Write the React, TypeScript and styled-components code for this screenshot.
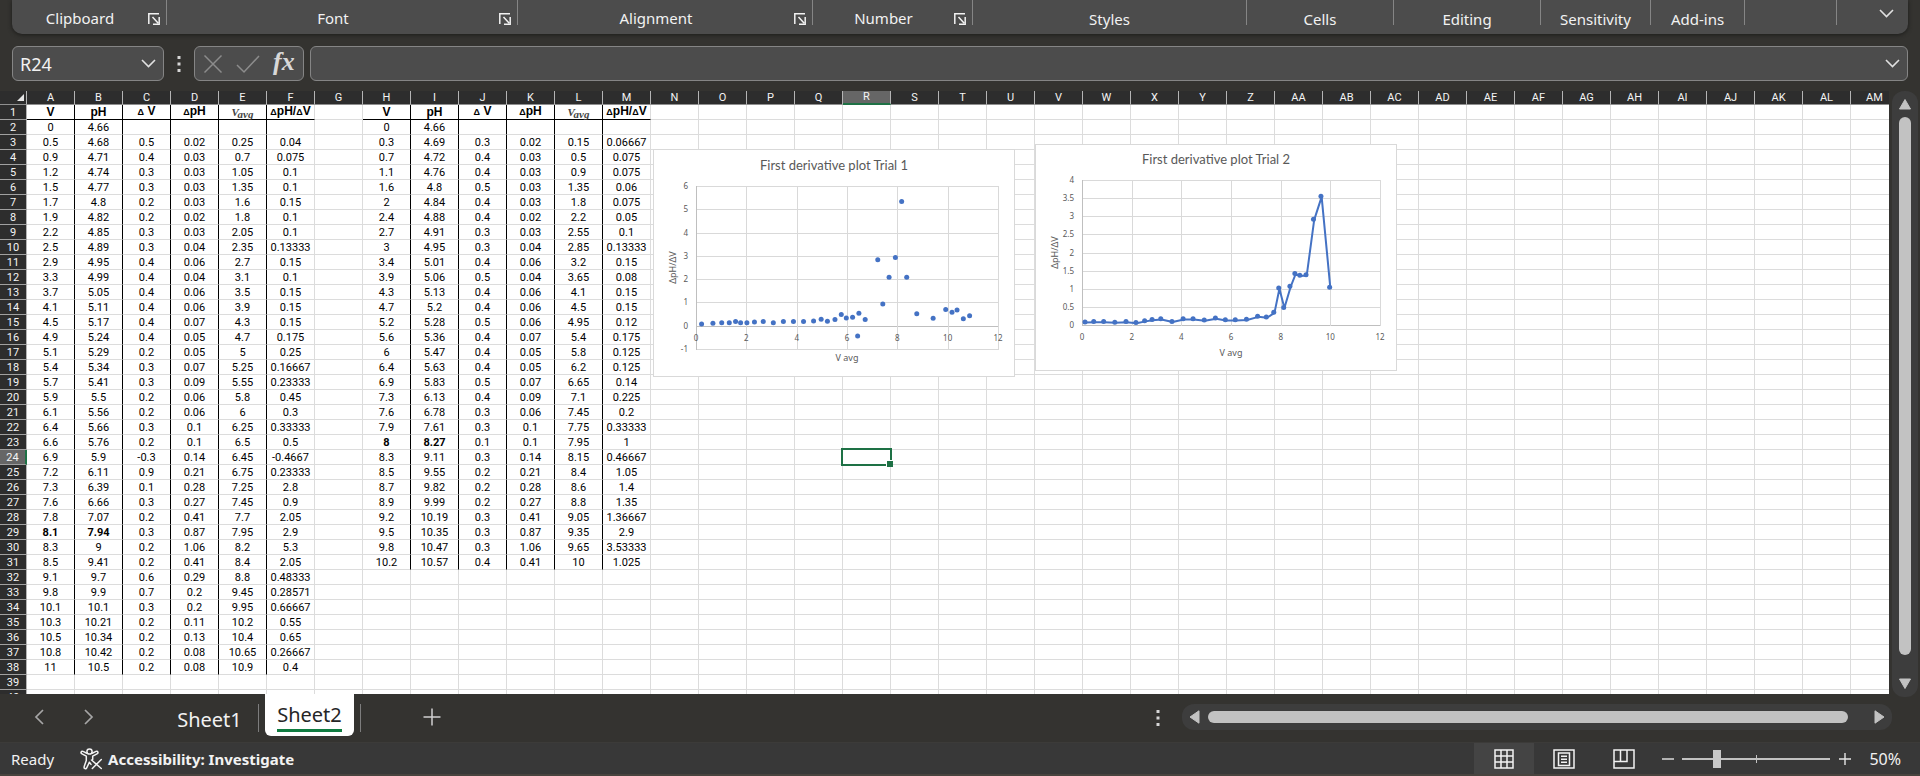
import React from "react";
import styled, { createGlobalStyle, css } from "styled-components";

const uiFont = `"Noto Sans", "Open Sans", sans-serif`;
const cellFont = `Roboto, "Liberation Sans", sans-serif`;
const green = "#1e7145";

const GlobalStyle = createGlobalStyle`
  * { box-sizing: border-box; }
  body {
    margin: 0;
    background: #343330;
    color: #f2f2f2;
    font-family: ${uiFont};
  }
  button, input {
    margin: 0;
    padding: 0;
    border: 0;
    background: none;
    color: inherit;
    font: inherit;
  }
  svg { display: block; }
`;

const Window = styled.div`
  display: flex;
  flex-direction: column;
  height: 100vh;
  overflow: hidden;
`;

/* ---------- ribbon ---------- */

const Ribbon = styled.header`
  display: flex;
  flex: none;
  height: 34px;
  margin: 0 12px;
  background: #4c4c4c;
  border-radius: 0 0 10px 10px;
  box-shadow: 0 1px 4px #1c1c1a;
`;

const Group = styled.section<{ $size: number; $low?: boolean }>`
  display: flex;
  flex: ${(p) => p.$size} 1 0;
  min-width: 0;
  height: 25px;
  padding-top: ${(p) => (p.$low ? 9 : 8)}px;
  border-right: 1px solid #858585;
`;

const GroupLabel = styled.span`
  flex: 1;
  font-size: 15px;
  line-height: 20px;
  text-align: center;
  white-space: nowrap;
`;

const Launcher = styled.button`
  display: flex;
  flex: none;
  align-items: flex-start;
  width: 18px;
  height: 16px;
  padding-top: 5px;
`;

const RibbonEnd = styled.div`
  display: flex;
  flex: 57 1 0;
  align-items: flex-start;
  justify-content: flex-end;
  padding: 9px 14px 0 0;
`;

/* ---------- formula bar ---------- */

const FormulaBar = styled.div`
  display: flex;
  flex: none;
  padding: 12px 12px 10px;
`;

const Field = styled.div`
  display: flex;
  align-items: center;
  height: 35px;
  padding: 0 7px;
  background: #4c4c4c;
  border: 1px solid #858585;
  border-radius: 6px;
`;

const NameField = styled(Field)`
  width: 152px;
`;

const ToolField = styled(Field)`
  gap: 13px;
  width: 110px;
  margin-right: 6px;
  padding: 0 7px 0 8px;
  color: #8c8c8c;
`;

const FormulaField = styled(Field)`
  flex: 1;
`;

const FieldInput = styled.input`
  flex: 1;
  min-width: 0;
  font-size: 18px;
  line-height: 24px;
  outline: none;
`;

const IconButton = styled.button`
  display: flex;
  align-items: center;
  justify-content: center;
`;

const FxButton = styled(IconButton)`
  color: #d8d8d8;
  font: italic 700 26px/30px "Liberation Serif", serif;
  padding-bottom: 4px;
`;

const BarDots = styled.div`
  display: flex;
  align-items: center;
  justify-content: center;
  width: 30px;
`;

/* ---------- grid ---------- */

const Workspace = styled.main`
  display: flex;
  flex: 1;
  min-height: 0;
`;

const Sheet = styled.div`
  position: relative;
  flex: 1;
  min-width: 0;
  overflow: hidden;
  background: #fff;
`;

const GridTable = styled.table`
  table-layout: fixed;
  width: 1899px;
  border-spacing: 0;
  color: #000;
  font-family: ${cellFont};
  font-size: 11px;
  line-height: 13px;
`;

const RowHeadCol = styled.col`
  width: 27px;
`;

const DataCol = styled.col`
  width: 48px;
`;

const headCell = css`
  padding: 0;
  background: #2d2d2d;
  color: #f4f4f4;
  font-size: 11px;
  font-weight: 400;
  text-align: center;
`;

const ColHead = styled.th<{ $active?: boolean }>`
  ${headCell}
  height: 14px;
  line-height: 12px;
  border-right: 1px solid #b4b4b4;
  border-bottom: 1px solid #8f8f8f;
  ${(p) =>
    p.$active &&
    css`
      background: #666;
      border-bottom: 2px solid ${green};
    `}
`;

const Corner = styled(ColHead)`
  & svg {
    margin-left: 17px;
  }
`;

const RowHead = styled.th<{ $active?: boolean }>`
  ${headCell}
  height: 15px;
  line-height: 13px;
  border-right: 1px solid #b4b4b4;
  border-bottom: 1px solid #a0a0a0;
  ${(p) =>
    p.$active &&
    css`
      background: #666;
      border-right: 2px solid ${green};
    `}
`;

const Cell = styled.td<{ $ruled?: boolean; $head?: boolean; $bold?: boolean }>`
  height: 15px;
  padding: 0;
  overflow: visible;
  text-align: center;
  white-space: nowrap;
  font-weight: ${(p) => (p.$bold ? 700 : 400)};
  border-right: 1px solid ${(p) => (p.$ruled ? "#000" : "#dcdcdc")};
  border-bottom: 1px solid ${(p) => (p.$head ? "#000" : "#dcdcdc")};
`;

const SelectedCell = styled(Cell)`
  position: relative;
  &::before {
    content: "";
    position: absolute;
    inset: -2px;
    border: 2px solid ${green};
  }
  &::after {
    content: "";
    position: absolute;
    right: -3px;
    bottom: -3px;
    width: 6px;
    height: 6px;
    background: ${green};
    border: 1px solid #fff;
    border-width: 1px 0 0 1px;
  }
`;

const Heading = styled.span`
  font-family: "Liberation Sans", sans-serif;
  font-size: 12px;
  font-weight: 700;
`;

const Delta = styled.span`
  font-size: 9px;
`;

const Average = styled.i`
  color: #444;
  font-family: "Liberation Serif", serif;
  font-size: 11px;
  font-weight: 700;
`;

const Subscript = styled.span`
  position: relative;
  top: 2px;
`;

const ChartFrame = styled.figure<{ $x: number; $y: number; $height: number }>`
  position: absolute;
  left: ${(p) => p.$x}px;
  top: ${(p) => p.$y}px;
  width: 362px;
  height: ${(p) => p.$height}px;
  margin: 0;
  background: #fff;
  outline: 1px solid #d9d9d9;
  outline-offset: -1px;
`;

const ChartText = styled.text`
  fill: #595959;
  font-family: ${uiFont};
  font-size: 8px;
  text-anchor: middle;
`;

const AxisTitle = styled(ChartText)`
  font-size: 9px;
`;

const TickY = styled(ChartText)`
  text-anchor: end;
`;

const ChartTitle = styled(ChartText)`
  font-family: Lato, sans-serif;
  font-size: 13px;
`;

/* ---------- scroll bars ---------- */

const VerticalRail = styled.aside`
  flex: none;
  width: 31px;
  padding: 0 2px 0 3px;
`;

const VerticalTrack = styled.div`
  display: flex;
  flex-direction: column;
  align-items: center;
  height: calc(100% + 3px);
  padding: 7px 0;
  background: #3d3d3d;
  border-radius: 12px;
`;

const VerticalThumb = styled.div`
  flex: 1;
  width: 12px;
  margin: 5px 0 21px;
  background: #c2c2c2;
  border-radius: 6px;
`;

const HorizontalTrack = styled.div`
  display: flex;
  flex: none;
  align-items: center;
  width: 37%;
  height: 26px;
  margin: 10px 28px 0 22px;
  padding: 0 6px;
  background: #3d3d3d;
  border-radius: 12px;
`;

const HorizontalThumb = styled.div`
  flex: 1;
  height: 12px;
  margin: 0 24px 0 6px;
  background: #c2c2c2;
  border-radius: 6px;
`;

/* ---------- sheet tabs ---------- */

const TabBar = styled.nav`
  display: flex;
  flex: none;
  align-items: flex-start;
  height: 48px;
`;

const Arrows = styled.div`
  display: flex;
  gap: 36px;
  width: 165px;
  padding: 14px 0 0 32px;
  color: #a6a6a6;
`;

const Tab = styled.button`
  width: 93px;
  padding: 12px 4px 0 0;
  font-size: 20px;
  line-height: 28px;
  text-align: center;
`;

const Divider = styled.span`
  width: 1px;
  height: 28px;
  margin-top: 10px;
  background: #7d7d7d;
`;

const ActiveTab = styled.button`
  position: relative;
  width: 89px;
  height: 42px;
  margin: 0 6px;
  background: #fff;
  color: #262626;
  border-radius: 0 0 6px 6px;
  font-size: 20px;
  line-height: 28px;
  &::after {
    content: "";
    position: absolute;
    left: 12px;
    right: 12px;
    bottom: 4px;
    height: 3px;
    background: #107c41;
  }
`;

const AddTab = styled(IconButton)`
  margin: 14px 0 0 62px;
`;

const Spring = styled.div`
  flex: 1;
`;

const TabDots = styled.div`
  margin-top: 16px;
`;

/* ---------- status bar ---------- */

const StatusBar = styled.footer`
  display: flex;
  flex: none;
  align-items: center;
  height: 34px;
  padding: 0 19px 0 11px;
  background: #383838;
  border-top: 1px solid #3c3b39;
  border-bottom: 2px solid #48433e;
  font-size: 15px;
  line-height: 20px;
`;

const AccessButton = styled.button`
  display: flex;
  align-items: center;
  gap: 5px;
  margin-left: 26px;
  font-weight: 700;
`;

const ViewButton = styled(IconButton)<{ $active?: boolean }>`
  width: 60px;
  height: 31px;
  background: ${(p) => (p.$active ? "#444" : "transparent")};
`;

const ZoomGroup = styled.div`
  display: flex;
  align-items: center;
  margin-left: 5px;
`;

const ZoomButton = styled(IconButton)`
  width: 17px;
  height: 20px;
`;

const ZoomRange = styled.input`
  appearance: none;
  width: 148px;
  height: 18px;
  margin: 0 6px;
  background:
    linear-gradient(#c2c2c2, #c2c2c2) 50% 50% / 1px 8px no-repeat,
    linear-gradient(#c2c2c2, #c2c2c2) 50% 50% / 100% 2px no-repeat;
  &::-webkit-slider-thumb {
    appearance: none;
    width: 8px;
    height: 18px;
    background: #c8c8c8;
  }
`;

const ZoomLabel = styled.output`
  width: 48px;
  font-size: 16px;
  text-align: right;
`;

/* ---------- data ---------- */

const trialOne = `0|4.66
0.5|4.68|0.5|0.02|0.25|0.04
0.9|4.71|0.4|0.03|0.7|0.075
1.2|4.74|0.3|0.03|1.05|0.1
1.5|4.77|0.3|0.03|1.35|0.1
1.7|4.8|0.2|0.03|1.6|0.15
1.9|4.82|0.2|0.02|1.8|0.1
2.2|4.85|0.3|0.03|2.05|0.1
2.5|4.89|0.3|0.04|2.35|0.13333
2.9|4.95|0.4|0.06|2.7|0.15
3.3|4.99|0.4|0.04|3.1|0.1
3.7|5.05|0.4|0.06|3.5|0.15
4.1|5.11|0.4|0.06|3.9|0.15
4.5|5.17|0.4|0.07|4.3|0.15
4.9|5.24|0.4|0.05|4.7|0.175
5.1|5.29|0.2|0.05|5|0.25
5.4|5.34|0.3|0.07|5.25|0.16667
5.7|5.41|0.3|0.09|5.55|0.23333
5.9|5.5|0.2|0.06|5.8|0.45
6.1|5.56|0.2|0.06|6|0.3
6.4|5.66|0.3|0.1|6.25|0.33333
6.6|5.76|0.2|0.1|6.5|0.5
6.9|5.9|-0.3|0.14|6.45|-0.4667
7.2|6.11|0.9|0.21|6.75|0.23333
7.3|6.39|0.1|0.28|7.25|2.8
7.6|6.66|0.3|0.27|7.45|0.9
7.8|7.07|0.2|0.41|7.7|2.05
8.1|7.94|0.3|0.87|7.95|2.9
8.3|9|0.2|1.06|8.2|5.3
8.5|9.41|0.2|0.41|8.4|2.05
9.1|9.7|0.6|0.29|8.8|0.48333
9.8|9.9|0.7|0.2|9.45|0.28571
10.1|10.1|0.3|0.2|9.95|0.66667
10.3|10.21|0.2|0.11|10.2|0.55
10.5|10.34|0.2|0.13|10.4|0.65
10.8|10.42|0.2|0.08|10.65|0.26667
11|10.5|0.2|0.08|10.9|0.4`
  .split("\n")
  .map((line) => line.split("|"));

const trialTwo = `0|4.66
0.3|4.69|0.3|0.02|0.15|0.06667
0.7|4.72|0.4|0.03|0.5|0.075
1.1|4.76|0.4|0.03|0.9|0.075
1.6|4.8|0.5|0.03|1.35|0.06
2|4.84|0.4|0.03|1.8|0.075
2.4|4.88|0.4|0.02|2.2|0.05
2.7|4.91|0.3|0.03|2.55|0.1
3|4.95|0.3|0.04|2.85|0.13333
3.4|5.01|0.4|0.06|3.2|0.15
3.9|5.06|0.5|0.04|3.65|0.08
4.3|5.13|0.4|0.06|4.1|0.15
4.7|5.2|0.4|0.06|4.5|0.15
5.2|5.28|0.5|0.06|4.95|0.12
5.6|5.36|0.4|0.07|5.4|0.175
6|5.47|0.4|0.05|5.8|0.125
6.4|5.63|0.4|0.05|6.2|0.125
6.9|5.83|0.5|0.07|6.65|0.14
7.3|6.13|0.4|0.09|7.1|0.225
7.6|6.78|0.3|0.06|7.45|0.2
7.9|7.61|0.3|0.1|7.75|0.33333
8|8.27|0.1|0.1|7.95|1
8.3|9.11|0.3|0.14|8.15|0.46667
8.5|9.55|0.2|0.21|8.4|1.05
8.7|9.82|0.2|0.28|8.6|1.4
8.9|9.99|0.2|0.27|8.8|1.35
9.2|10.19|0.3|0.41|9.05|1.36667
9.5|10.35|0.3|0.87|9.35|2.9
9.8|10.47|0.3|1.06|9.65|3.53333
10.2|10.57|0.4|0.41|10|1.025`
  .split("\n")
  .map((line) => line.split("|"));

const letters = "ABCDEFGHIJKLMNOPQRSTUVWXYZ".split("");
const columns = [...letters, ...letters.slice(0, 13).map((l) => "A" + l)];
const rows = Array.from({ length: 40 }, (_, i) => i + 1);

const headings: React.ReactNode[] = [
  <Heading>V</Heading>,
  <Heading>pH</Heading>,
  <Heading><Delta>Δ</Delta> V</Heading>,
  <Heading><Delta>Δ</Delta>pH</Heading>,
  <Average>V<Subscript>avg</Subscript></Average>,
  <Heading><Delta>Δ</Delta>pH/<Delta>Δ</Delta>V</Heading>,
];

function GridCell({ row, col }: { row: number; col: number }) {
  if (columns[col] === "R" && row === 24) return <SelectedCell />;
  const second = col >= 7;
  const field = second ? col - 7 : col;
  const data = second ? trialTwo : trialOne;
  if (field > 5 || row > data.length + 1) return <Cell />;
  const bold = field < 2 && row === (second ? 23 : 29);
  return (
    <Cell $ruled={field < 5} $head={row === 1} $bold={bold}>
      {row === 1 ? headings[field] : data[row - 2][field]}
    </Cell>
  );
}

/* ---------- charts ---------- */

type ChartProps = {
  title: string;
  x: number;
  y: number;
  height: number;
  plot: { left: number; right: number; top: number; bottom: number };
  min: number;
  max: number;
  step: number;
  data: string[][];
  joined?: boolean;
  titleX: number;
  titleY: number;
  axisY: number;
};

function Chart(p: ChartProps) {
  const { left, right, top, bottom } = p.plot;
  const px = (v: number) => left + (v / 12) * (right - left);
  const py = (v: number) => bottom - ((v - p.min) / (p.max - p.min)) * (bottom - top);
  const ticksY: number[] = [];
  for (let v = p.min; v <= p.max; v += p.step) ticksY.push(v);
  const ticksX = [0, 2, 4, 6, 8, 10, 12];
  const points = p.data.filter((r) => r.length > 2).map((r) => [Number(r[4]), Number(r[5])]);
  const middle = (top + bottom) / 2;
  return (
    <ChartFrame $x={p.x} $y={p.y} $height={p.height}>
      <svg width="362" height={p.height} role="img" aria-label={p.title}>
        {ticksY.map((v) => (
          <line key={v} x1={left} x2={right} y1={Math.round(py(v)) + 0.5} y2={Math.round(py(v)) + 0.5} stroke={v === 0 ? "#bfbfbf" : "#d9d9d9"} />
        ))}
        {ticksX.map((v) => (
          <line key={v} x1={Math.round(px(v)) + 0.5} x2={Math.round(px(v)) + 0.5} y1={top} y2={bottom + 1} stroke={v === 0 ? "#bfbfbf" : "#d9d9d9"} />
        ))}
        <ChartTitle x={p.titleX} y={p.titleY}>{p.title}</ChartTitle>
        {ticksY.map((v) => (
          <TickY key={v} x={left - 8} y={py(v) + 3}>{v}</TickY>
        ))}
        {ticksX.map((v) => (
          <ChartText key={v} x={px(v)} y={py(0) + 15}>{v}</ChartText>
        ))}
        <AxisTitle x={(left + right) / 2} y={p.axisY}>V avg</AxisTitle>
        <AxisTitle transform={`translate(23 ${middle}) rotate(-90)`}>ΔpH/ΔV</AxisTitle>
        {p.joined && (
          <polyline points={points.map(([a, b]) => `${px(a)},${py(b)}`).join(" ")} fill="none" stroke="#4472c4" strokeWidth="2" strokeLinejoin="round" />
        )}
        {points.map(([a, b], i) => (
          <circle key={i} cx={px(a) - 0.7} cy={py(b) - 0.7} r="2.5" fill="#4472c4" />
        ))}
      </svg>
    </ChartFrame>
  );
}

/* ---------- icons ---------- */

const Chevron = () => (
  <svg width="15" height="9" viewBox="0 0 15 9" fill="none" stroke="#e0e0e0" strokeWidth="1.6">
    <path d="M1 1l6.500 6.500L14 1" />
  </svg>
);

const LauncherIcon = () => (
  <svg width="12" height="12" viewBox="0 0 12 12" fill="none" stroke="#f2f2f2" strokeWidth="1.5">
    <path d="M.8 11V.8H11M4.500 4l5.500 6M11.200 4v7.200H5" />
  </svg>
);

const Dots = () => (
  <svg width="4" height="16" viewBox="0 0 4 16" fill="#d6d6d6">
    <rect x=".5" y="0" width="3" height="3" />
    <rect x=".5" y="6.500" width="3" height="3" />
    <rect x=".5" y="13" width="3" height="3" />
  </svg>
);

const arrowPaths = {
  up: "M7 1.500L12.500 11H1.500z",
  down: "M7 12.500L12.500 3H1.500z",
  left: "M2 7L11 .8v12.400z",
  right: "M12 7L3 .8v12.400z",
};

const Arrow = ({ to }: { to: keyof typeof arrowPaths }) => (
  <svg width="14" height="14" viewBox="0 0 14 14" fill="#c2c2c2" stroke="#c2c2c2" strokeWidth="1" strokeLinejoin="round">
    <path d={arrowPaths[to]} />
  </svg>
);

const Angle = ({ to }: { to: "left" | "right" }) => (
  <svg width="14" height="18" viewBox="0 0 14 18" fill="none" stroke="currentColor" strokeWidth="1.700">
    <path d={to === "left" ? "M11 2L4 9l7 7" : "M3 2l7 7-7 7"} />
  </svg>
);

const AccessIcon = () => (
  <svg width="23" height="22" viewBox="0 0 23 22" fill="none" stroke="#f2f2f2" strokeWidth="1.500" strokeLinecap="round" strokeLinejoin="round">
    <circle cx="9.500" cy="3.500" r="2.600" />
    <path d="M6.800 5.200L3 3.400C1.200 2.700.2 5 2 5.900l4.300 2.300v4.200L4.200 18.600c-.6 2 1.800 2.900 2.600 1l2.600-5.400 1.600 2.200M12.200 5.200L16 3.400c1.800-.7 2.800 1.600 1 2.500l-4.300 2.300v3.200M11.500 12l9.800 8.500M21.300 11.500l-9 9" />
  </svg>
);

const NormalViewIcon = () => (
  <svg width="20" height="20" viewBox="0 0 20 20" fill="none" stroke="#f2f2f2" strokeWidth="1.500">
    <path d="M1 1h18v18H1zM7 1v18M13 1v18M1 7h18M1 13h18" />
  </svg>
);

const PageViewIcon = () => (
  <svg width="22" height="20" viewBox="0 0 22 20" fill="none" stroke="#f2f2f2" strokeWidth="1.500">
    <path d="M1 1h20v18H1zM5.500 4h11v12.500h-11zM8 7.200h6M8 10.200h6M8 13.200h6" />
  </svg>
);

const BreakViewIcon = () => (
  <svg width="22" height="20" viewBox="0 0 22 20" fill="none" stroke="#f2f2f2" strokeWidth="1.500">
    <path d="M1 1h20v18H1zM1 12.500h13V1M7.500 1v11.500" />
  </svg>
);

const groups: { name: string; size: number; launcher?: boolean }[] = [
  { name: "Clipboard", size: 154, launcher: true },
  { name: "Font", size: 350, launcher: true },
  { name: "Alignment", size: 294, launcher: true },
  { name: "Number", size: 159, launcher: true },
  { name: "Styles", size: 273 },
  { name: "Cells", size: 146 },
  { name: "Editing", size: 146 },
  { name: "Sensitivity", size: 109 },
  { name: "Add-ins", size: 93 },
  { name: "", size: 91 },
];

export default function App() {
  return (
    <Window>
      <GlobalStyle />
      <Ribbon>
        {groups.map((g) => (
          <Group key={g.name} $size={g.size} $low={!g.launcher}>
            <GroupLabel>{g.name}</GroupLabel>
            {g.launcher && (
              <Launcher aria-label={`${g.name} settings`}><LauncherIcon /></Launcher>
            )}
          </Group>
        ))}
        <RibbonEnd>
          <IconButton aria-label="Collapse ribbon"><Chevron /></IconButton>
        </RibbonEnd>
      </Ribbon>

      <FormulaBar>
        <NameField>
          <FieldInput aria-label="Name box" defaultValue="R24" />
          <IconButton aria-label="Show names"><Chevron /></IconButton>
        </NameField>
        <BarDots><Dots /></BarDots>
        <ToolField>
          <IconButton aria-label="Cancel">
            <svg width="20" height="20" viewBox="0 0 20 20" fill="none" stroke="currentColor" strokeWidth="1.500">
              <path d="M1.500 1.500l17 17M18.500 1.500l-17 17" />
            </svg>
          </IconButton>
          <IconButton aria-label="Enter">
            <svg width="24" height="20" viewBox="0 0 24 20" fill="none" stroke="currentColor" strokeWidth="1.500">
              <path d="M1 11l7 7L23 2" />
            </svg>
          </IconButton>
          <FxButton aria-label="Insert function">fx</FxButton>
        </ToolField>
        <FormulaField>
          <FieldInput aria-label="Formula" />
          <IconButton aria-label="Expand formula bar"><Chevron /></IconButton>
        </FormulaField>
      </FormulaBar>

      <Workspace>
        <Sheet>
          <GridTable>
            <colgroup>
              <RowHeadCol />
              {columns.map((c) => <DataCol key={c} />)}
            </colgroup>
            <thead>
              <tr>
                <Corner>
                  <svg width="7" height="7" viewBox="0 0 7 7" fill="#e6e6e6"><path d="M7 0v7H0z" /></svg>
                </Corner>
                {columns.map((c) => <ColHead key={c} $active={c === "R"}>{c}</ColHead>)}
              </tr>
            </thead>
            <tbody>
              {rows.map((row) => (
                <tr key={row}>
                  <RowHead $active={row === 24}>{row}</RowHead>
                  {columns.map((c, col) => <GridCell key={c} row={row} col={col} />)}
                </tr>
              ))}
            </tbody>
          </GridTable>
          <Chart
            title="First derivative plot Trial 1"
            x={653} y={58} height={228}
            plot={{ left: 43, right: 345, top: 37, bottom: 200 }}
            min={-1} max={6} step={1}
            data={trialOne}
            titleX={181} titleY={21} axisY={212}
          />
          <Chart
            title="First derivative plot Trial 2"
            x={1035} y={53} height={227}
            plot={{ left: 47, right: 345, top: 36, bottom: 181 }}
            min={0} max={4} step={0.5}
            data={trialTwo}
            joined
            titleX={181} titleY={20} axisY={212}
          />
        </Sheet>
        <VerticalRail>
          <VerticalTrack>
            <IconButton aria-label="Scroll up"><Arrow to="up" /></IconButton>
            <VerticalThumb />
            <IconButton aria-label="Scroll down"><Arrow to="down" /></IconButton>
          </VerticalTrack>
        </VerticalRail>
      </Workspace>

      <TabBar>
        <Arrows>
          <IconButton aria-label="Previous sheet"><Angle to="left" /></IconButton>
          <IconButton aria-label="Next sheet"><Angle to="right" /></IconButton>
        </Arrows>
        <Tab>Sheet1</Tab>
        <Divider />
        <ActiveTab>Sheet2</ActiveTab>
        <Divider />
        <AddTab aria-label="New sheet">
          <svg width="18" height="18" viewBox="0 0 18 18" stroke="#d0d0d0" strokeWidth="1.500"><path d="M9 .5v17M.5 9h17" /></svg>
        </AddTab>
        <Spring />
        <TabDots><Dots /></TabDots>
        <HorizontalTrack>
          <IconButton aria-label="Scroll left"><Arrow to="left" /></IconButton>
          <HorizontalThumb />
          <IconButton aria-label="Scroll right"><Arrow to="right" /></IconButton>
        </HorizontalTrack>
      </TabBar>

      <StatusBar>
        <span>Ready</span>
        <AccessButton><AccessIcon />Accessibility: Investigate</AccessButton>
        <Spring />
        <ViewButton $active aria-label="Normal view"><NormalViewIcon /></ViewButton>
        <ViewButton aria-label="Page layout view"><PageViewIcon /></ViewButton>
        <ViewButton aria-label="Page break preview"><BreakViewIcon /></ViewButton>
        <ZoomGroup>
          <ZoomButton aria-label="Zoom out">
            <svg width="14" height="14" viewBox="0 0 14 14" stroke="#e6e6e6" strokeWidth="1.400"><path d="M1 7h12" /></svg>
          </ZoomButton>
          <ZoomRange type="range" aria-label="Zoom" min="0" max="100" defaultValue="22" />
          <ZoomButton aria-label="Zoom in">
            <svg width="14" height="14" viewBox="0 0 14 14" stroke="#e6e6e6" strokeWidth="1.400"><path d="M1 7h12M7 1v12" /></svg>
          </ZoomButton>
          <ZoomLabel>50%</ZoomLabel>
        </ZoomGroup>
      </StatusBar>
    </Window>
  );
}
